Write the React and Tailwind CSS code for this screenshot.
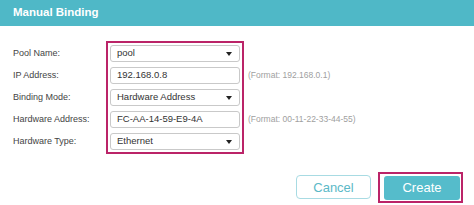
import React from 'react';

const font = { fontFamily: '"Liberation Sans", Arial, sans-serif' };

const rows = [
    { label: 'Pool Name:', value: 'pool', select: true },
    { label: 'IP Address:', value: '192.168.0.8', hint: '(Format: 192.168.0.1)' },
    { label: 'Binding Mode:', value: 'Hardware Address', select: true },
    { label: 'Hardware Address:', value: 'FC-AA-14-59-E9-4A', hint: '(Format: 00-11-22-33-44-55)' },
    { label: 'Hardware Type:', value: 'Ethernet', select: true },
];

const Field = ({ value, select }) => (
    <div className="h-[17px] w-[130px] flex items-center justify-between border border-[#c9c9c9] rounded-[3px] bg-white pl-[6px] pr-[7px]">
        <span className="text-[9.5px] text-[#333]">{value}</span>
        {select && (
            <svg width="6" height="4" viewBox="0 0 6 4">
                <path d="M0 0 L6 0 L3 4 Z" fill="#222" />
            </svg>
        )}
    </div>
);

export default function App() {
    return (
        <div className="w-[474px] h-[205px] bg-white overflow-hidden" style={font}>
            <div className="h-[26px] bg-[#4fb8c7] flex items-center px-[13px]">
                <span className="text-white font-bold text-[11.5px]">Manual Binding</span>
            </div>

            <div className="flex mt-[15px]">
                {/* labels */}
                <div className="w-[106px] pl-[13px] pt-[4px] flex flex-col gap-[5px]">
                    {rows.map((r) => (
                        <div key={r.label} className="h-[17px] flex items-center text-[9px] text-[#444]">
                            {r.label}
                        </div>
                    ))}
                </div>

                {/* highlighted inputs */}
                <div className="border-2 border-[#bb2468] p-[2px] flex flex-col gap-[5px]">
                    {rows.map((r) => (
                        <Field key={r.label} value={r.value} select={r.select} />
                    ))}
                </div>

                {/* hints */}
                <div className="pl-[4px] pt-[4px] flex flex-col gap-[5px]">
                    {rows.map((r) => (
                        <div key={r.label} className="h-[17px] flex items-center text-[8.5px] text-[#a0a0a0]">
                            {r.hint || ''}
                        </div>
                    ))}
                </div>
            </div>

            <div className="flex justify-end items-center pr-[11px] mt-[18px] gap-[7px]">
                <button className="w-[75px] h-[24px] rounded-[4px] border border-[#a8dbe3] bg-white text-[#5bb9c7] text-[13px]">
                    Cancel
                </button>
                <div className="border-2 border-[#bb2468] p-[1px] pl-[4px]">
                    <button className="w-[76px] h-[24px] rounded-[3px] bg-[#55bccb] text-white text-[13px]">
                        Create
                    </button>
                </div>
            </div>
        </div>
    );
}
